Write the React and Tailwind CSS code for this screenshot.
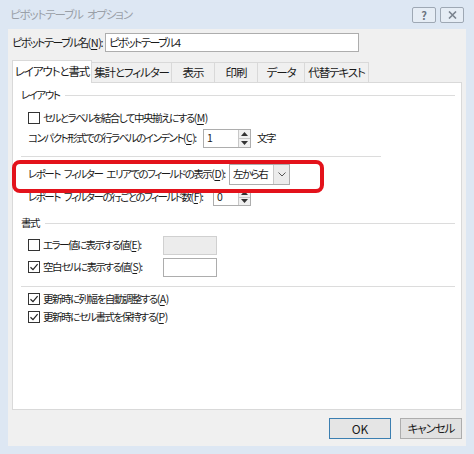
import React from "react";

const font = "font-['Noto_Sans_CJK_JP','Noto_Sans',sans-serif] [font-feature-settings:'palt']";

function Check({ checked }) {
  return (
    <span className="flex h-[12px] w-[12px] shrink-0 items-center justify-center border border-[#333] bg-white">
      {checked && (
        <svg width="10" height="10" viewBox="0 0 10 10">
          <path d="M1.5 5.2 L4 7.6 L8.6 2.2" fill="none" stroke="#222" strokeWidth="1.2" />
        </svg>
      )}
    </span>
  );
}

function Spin() {
  return (
    <span className="flex h-full w-[12px] flex-col border-l border-[#c8c8c8] bg-[#f0f0f0]">
      <span className="flex flex-1 items-center justify-center border-b border-[#c8c8c8]">
        <svg width="7" height="4" viewBox="0 0 7 4">
          <path d="M0 4 L3.5 0 L7 4 Z" fill="#333" />
        </svg>
      </span>
      <span className="flex flex-1 items-center justify-center">
        <svg width="7" height="4" viewBox="0 0 7 4">
          <path d="M0 0 L3.5 4 L7 0 Z" fill="#333" />
        </svg>
      </span>
    </span>
  );
}

function U({ children }) {
  return <span className="px-[1px] underline underline-offset-[2px]">{children}</span>;
}

const Sp = () => <span className="inline-block w-[4px]" />;

function GroupTitle({ children }) {
  return (
    <div className="flex h-[20px] items-center gap-[6px] pl-[8px] pr-[6px]">
      <span>{children}</span>
      <span className="h-px flex-1 bg-[#dcdcdc]" />
    </div>
  );
}

const tabs = ["集計とフィルター", "表示", "印刷", "データ", "代替テキスト"];
const tabW = ["w-[80px]", "w-[43px]", "w-[43px]", "w-[47px]", "w-[64px]"];

export default function App() {
  return (
    <div className={`flex h-[454px] w-[474px] flex-col whitespace-nowrap bg-[#dde7f3] text-[10.5px] tracking-[-1.5px] text-[#1a1a1a] ${font}`}>
      <div className="flex h-[29px] items-center justify-between pl-[10px] pr-[10px]">
        <span className="text-[11.5px] tracking-[-1.1px] text-[#9aa0a8]">
          ピボットテーブル<Sp />オプション
        </span>
        <div className="flex gap-[4px] pt-[1px]">
          <span className="flex h-[16px] w-[24px] items-center justify-center rounded-[2px] border border-[#9ea8b4] bg-[#e6edf5] text-[11px] font-bold tracking-normal text-[#6b7480]">?</span>
          <span className="flex h-[16px] w-[24px] items-center justify-center rounded-[2px] border border-[#9ea8b4] bg-[#e6edf5]">
            <svg width="9" height="8" viewBox="0 0 9 8">
              <path d="M1 0.5 L8 7.5 M8 0.5 L1 7.5" stroke="#7a838e" strokeWidth="1.6" />
            </svg>
          </span>
        </div>
      </div>

      <div className="mx-[8px] mb-[8px] flex flex-1 flex-col bg-[#f0f0f0] px-[4px] pb-[7px] pt-[4px]">
        <div className="flex h-[19px] items-center">
          <span className="min-w-[93px] shrink-0 pr-[2px] text-[11px]">
            ピボットテーブル名(<U>N</U>):
          </span>
          <span className="flex h-full w-[254px] items-center border border-[#adadad] bg-white px-[3px] text-[11px]">ピボットテーブル4</span>
        </div>

        <div className="mt-[8px] flex h-[22px] items-end">
          <span className="relative z-10 -mb-px flex h-[23px] w-[80px] items-center justify-center border border-b-0 border-[#d9d9d9] bg-white text-[11.5px] tracking-[-1.1px]">
            レイアウトと書式
          </span>
          {tabs.map((t, i) => (
            <span key={t} className={`flex h-[20px] ${tabW[i]} items-center justify-center border border-l-0 border-b-0 border-[#d9d9d9] bg-[#f0f0f0] text-[11.5px] tracking-[-1.1px]`}>
              {t}
            </span>
          ))}
        </div>

        <div className="relative flex h-[328px] flex-col border border-[#d9d9d9] bg-white pt-[2px]">
          <GroupTitle>レイアウト</GroupTitle>
          <div className="mt-[3px] flex h-[20px] items-center gap-[3px] pl-[15px]">
            <Check />
            <span>
              セルとラベルを結合して中央揃えにする(<U>M</U>)
            </span>
          </div>
          <div className="flex h-[20px] items-center pl-[15px]">
            <span className="min-w-[175px] shrink-0 pr-[2px]">
              コンパクト形式での行ラベルのインデント(<U>C</U>):
            </span>
            <span className="flex h-[19px] w-[48px] border border-[#adadad] bg-white">
              <span className="flex flex-1 items-center pl-[3px]">1</span>
              <Spin />
            </span>
            <span className="pl-[6px]">文字</span>
          </div>
          <div className="ml-[8px] mt-[8px] h-px w-[360px] bg-[#dcdcdc]" />

          <div className="mt-[6px] flex h-[22px] items-center pl-[15px]">
            <span className="min-w-[201px] shrink-0 pr-[2px]">
              レポート<Sp />フィルター<Sp />エリアでのフィールドの表示(<U>D</U>):
            </span>
            <span className="flex h-[21px] w-[61px] border border-[#adadad] bg-white">
              <span className="flex flex-1 items-center pl-[3px]">左から右</span>
              <span className="flex w-[16px] items-center justify-center border-l border-[#c8c8c8] bg-[#ececec]">
                <svg width="8" height="5" viewBox="0 0 8 5">
                  <path d="M0.5 0.5 L4 4 L7.5 0.5" fill="none" stroke="#555" strokeWidth="1" />
                </svg>
              </span>
            </span>
          </div>
          <div className="mt-[2px] flex h-[20px] items-center pl-[15px]">
            <span className="min-w-[185px] shrink-0 pr-[2px]">
              レポート<Sp />フィルターの行ごとのフィールド数(<U>F</U>):
            </span>
            <span className="flex h-[17px] w-[38px] border border-[#adadad] bg-white">
              <span className="flex flex-1 items-center pl-[3px]">0</span>
              <Spin />
            </span>
          </div>

          <div className="mt-[6px]">
            <GroupTitle>書式</GroupTitle>
          </div>
          <div className="mt-[2px] flex h-[20px] items-center pl-[15px]">
            <span className="flex min-w-[135px] shrink-0 items-center gap-[3px] pr-[2px]">
              <Check />
              <span>
                エラー値に表示する値(<U>E</U>):
              </span>
            </span>
            <span className="h-[19px] w-[54px] border border-[#d0d0d0] bg-[#ececec]" />
          </div>
          <div className="mt-[2px] flex h-[20px] items-center pl-[15px]">
            <span className="flex min-w-[135px] shrink-0 items-center gap-[3px] pr-[2px]">
              <Check checked />
              <span>
                空白セルに表示する値(<U>S</U>):
              </span>
            </span>
            <span className="h-[19px] w-[54px] border border-[#adadad] bg-white" />
          </div>
          <div className="ml-[8px] mr-[6px] mt-[9px] h-px bg-[#dcdcdc]" />
          <div className="mt-[3px] flex h-[18px] items-center gap-[3px] pl-[15px]">
            <Check checked />
            <span>
              更新時に列幅を自動調整する(<U>A</U>)
            </span>
          </div>
          <div className="flex h-[18px] items-center gap-[3px] pl-[15px]">
            <Check checked />
            <span>
              更新時にセル書式を保持する(<U>P</U>)
            </span>
          </div>

          <div className="absolute left-[-1px] top-[77px] h-[33px] w-[312px] rounded-[8px] border-[4px] border-[#e3121b]" />
        </div>

        <div className="mt-[8px] flex justify-end gap-[9px]">
          <span className="flex h-[21px] w-[62px] items-center justify-center border border-[#3c7fb1] bg-[#e5e5e5] text-[12px] tracking-normal">OK</span>
          <span className="flex h-[21px] w-[62px] items-center justify-center border border-[#adadad] bg-[#e1e1e1] text-[11.5px] tracking-[-1.1px]">キャンセル</span>
        </div>
      </div>
    </div>
  );
}
